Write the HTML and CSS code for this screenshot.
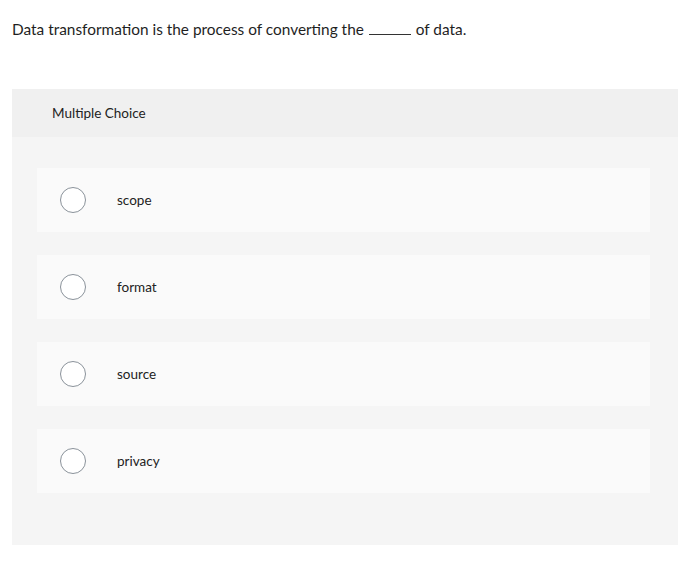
FILE: index.html
```html
<!DOCTYPE html>
<html>
<head>
<meta charset="utf-8">
<link rel="stylesheet" href="styles.css">
</head>
<body>
<p class="question">Data transformation is the process of converting the <span class="blank"></span> of data.</p>
<section class="panel">
  <div class="panel-head">Multiple Choice</div>
  <div class="panel-body">
    <div class="option"><span class="radio"></span><span class="label">scope</span></div>
    <div class="option"><span class="radio"></span><span class="label">format</span></div>
    <div class="option"><span class="radio"></span><span class="label">source</span></div>
    <div class="option"><span class="radio"></span><span class="label">privacy</span></div>
  </div>
</section>
</body>
</html>
```
FILE: styles.css
```css
html, body {
  margin: 0;
  padding: 0;
  background: #ffffff;
}
body {
  font-family: Lato, "Liberation Sans", sans-serif;
  color: #222;
  width: 700px;
  height: 565px;
  overflow: hidden;
}
.question {
  margin: 0;
  padding: 19px 0 0 12px;
  font-size: 15.4px;
  line-height: 20px;
  color: #1f1f1f;
}
.blank {
  display: inline-block;
  width: 42px;
  border-bottom: 1px solid #333;
  vertical-align: baseline;
  margin: 0 1px;
}
.panel {
  margin: 50px 22px 0 12px;
  background: #f5f5f5;
}
.panel-head {
  background: #f0f0f0;
  height: 48px;
  display: flex;
  align-items: center;
  padding-left: 40px;
  font-size: 13.5px;
  color: #222;
}
.panel-body {
  padding: 31px 28px 52px 25px;
  display: flex;
  flex-direction: column;
  gap: 23px;
}
.option {
  height: 64px;
  background: #fafafa;
  display: flex;
  align-items: center;
  padding-left: 23px;
}
.radio {
  width: 26px;
  height: 26px;
  border: 1.3px solid #8a929a;
  border-radius: 50%;
  background: #fff;
  box-sizing: border-box;
  flex: none;
}
.label {
  margin-left: 31px;
  font-size: 13.5px;
  color: #222;
}
```
